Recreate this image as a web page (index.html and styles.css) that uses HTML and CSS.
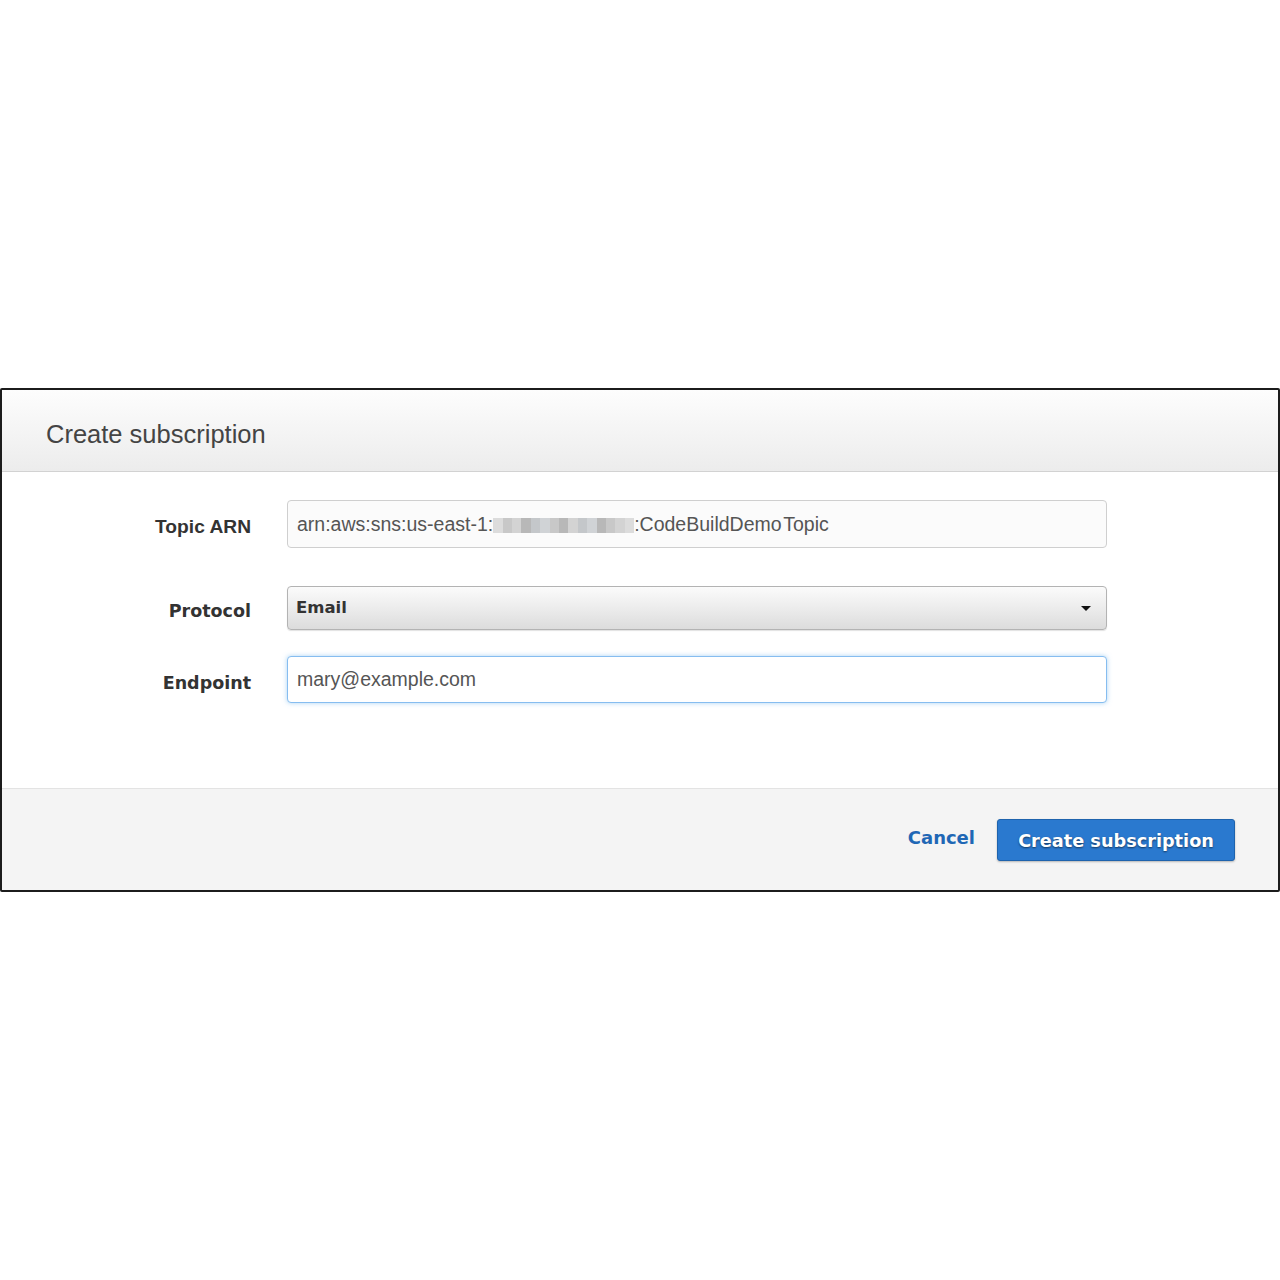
FILE: index.html
```html
<!DOCTYPE html>
<html>
<head>
<meta charset="utf-8">
<link rel="stylesheet" href="styles.css">
</head>
<body>
<div class="page">
  <div class="dialog">
    <div class="header">
      <h1 class="title">Create subscription</h1>
    </div>
    <div class="body">
      <div class="row row-arn">
        <label class="label label-arn">Topic ARN</label>
        <div class="input">
          <span>arn:aws:sns:us-east-1:</span><span class="redact"><i class="b1"></i><i class="b2"></i><i class="b3"></i><i class="b4"></i><i class="b5"></i><i class="b6"></i><i class="b2"></i><i class="b4"></i><i class="b3"></i><i class="b5"></i><i class="b6"></i><i class="b4"></i><i class="b2"></i><i class="b3"></i><i class="b1"></i></span><span>:CodeBuildDemo&#8202;Topic</span>
        </div>
      </div>
      <div class="row row-proto">
        <label class="label label-proto">Protocol</label>
        <div class="select">
          <span>Email</span>
          <span class="caret"></span>
        </div>
      </div>
      <div class="row">
        <label class="label label-end">Endpoint</label>
        <div class="input input-focus">mary@example.com</div>
      </div>
    </div>
    <div class="footer">
      <a class="cancel">Cancel</a>
      <button class="primary">Create subscription</button>
    </div>
  </div>
</div>
</body>
</html>
```
FILE: styles.css
```css
html, body {
  margin: 0;
  padding: 0;
  background: #ffffff;
}
.page {
  padding-top: 388px;
}
.dialog {
  width: 1280px;
  box-sizing: border-box;
  border: 2px solid #1c1c1c;
  border-radius: 2px;
  background: #fff;
  display: flex;
  flex-direction: column;
}
.header {
  height: 82px;
  box-sizing: border-box;
  border-bottom: 1px solid #d2d2d2;
  background: linear-gradient(to bottom, #fdfdfd 0%, #ececec 100%);
  display: flex;
  align-items: center;
  padding-left: 44px;
}
.title {
  margin: 0;
  padding-top: 7px;
  font-family: "Liberation Sans", Arial, sans-serif;
  font-weight: normal;
  font-size: 25.5px;
  color: #444;
}
.body {
  height: 316px;
  box-sizing: border-box;
  padding-top: 28px;
  display: flex;
  flex-direction: column;
}
.row {
  display: flex;
  align-items: center;
  gap: 36px;
}
.row-arn {
  margin-bottom: 38px;
}
.row-proto {
  margin-bottom: 26px;
}
.label {
  width: 249px;
  text-align: right;
  font-weight: bold;
  color: #333;
}
.label-arn {
  font-family: "Liberation Sans", Arial, sans-serif;
  font-size: 19.2px;
  padding-top: 6px;
}
.label-proto, .label-end {
  font-family: "DejaVu Sans", Verdana, sans-serif;
  font-size: 17.5px;
  padding-top: 6px;
}
.input {
  width: 820px;
  height: 48px;
  box-sizing: border-box;
  border: 1px solid #cfcfcf;
  border-radius: 4px;
  background: #fbfbfb;
  padding-left: 9px;
  display: flex;
  align-items: center;
  font-family: "Liberation Sans", Arial, sans-serif;
  font-size: 19.5px;
  color: #555;
  white-space: nowrap;
}
.redact {
  display: inline-flex;
  height: 15px;
  margin-top: 2px;
  width: 141px;
}
.redact i {
  flex: 1;
  display: block;
}
.b1 { background: #dcdcdc; }
.b2 { background: #c8c8c8; }
.b3 { background: #d3d3d3; }
.b4 { background: #b8b8b8; }
.b5 { background: #c4c7ca; }
.b6 { background: #d0d3d6; }
.select {
  width: 820px;
  height: 44px;
  box-sizing: border-box;
  border: 1px solid #b3b3b3;
  border-radius: 4px;
  background: linear-gradient(to bottom, #fbfbfb 0%, #e9e9e9 60%, #dcdcdc 100%);
  box-shadow: 0 1px 1px rgba(0,0,0,0.12);
  display: flex;
  align-items: center;
  justify-content: space-between;
  padding: 0 15px 2px 8px;
  font-family: "DejaVu Sans", Verdana, sans-serif;
  font-weight: bold;
  font-size: 16.5px;
  color: #333;
}
.caret {
  width: 0;
  height: 0;
  border-left: 5px solid transparent;
  border-right: 5px solid transparent;
  border-top: 5px solid #111;
  margin-top: 2px;
}
.input-focus {
  height: 47px;
  background: #fff;
  border-color: #86bdf0;
  box-shadow: 0 0 5px rgba(102,175,233,0.55);
}
.footer {
  height: 102px;
  box-sizing: border-box;
  border-top: 1px solid #e3e3e3;
  background: #f4f4f4;
  display: flex;
  justify-content: flex-end;
  align-items: flex-start;
  padding: 30px 43px 0 0;
  gap: 22px;
}
.cancel {
  font-family: "DejaVu Sans", Verdana, sans-serif;
  font-weight: bold;
  font-size: 18px;
  color: #1f67b5;
  margin-top: 8px;
  cursor: pointer;
}
.primary {
  width: 238px;
  height: 42px;
  margin: 0;
  border: 1px solid #1e63ad;
  border-radius: 3px;
  background: #2a79cf;
  box-shadow: 0 1px 2px rgba(0,0,0,0.25);
  color: #fff;
  font-family: "DejaVu Sans", Verdana, sans-serif;
  font-weight: bold;
  font-size: 17.7px;
  text-shadow: 0 1px 2px rgba(0,0,0,0.55);
  padding: 2px 0 0 0;
  cursor: pointer;
}
```
